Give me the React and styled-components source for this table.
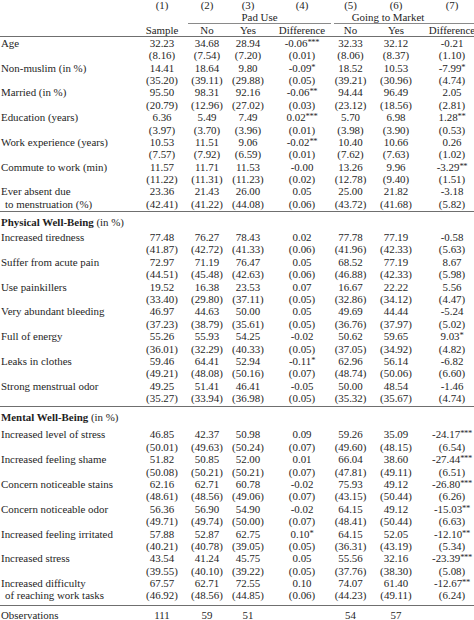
import React from "react";
import styled, { createGlobalStyle } from "styled-components";

const GlobalStyle = createGlobalStyle`
  body {
    margin: 0;
    background: #fff;
  }
`;

const Table = styled.div`
  width: 474px;
  margin-top: -1px;
  font-family: "Liberation Serif", "Times New Roman", serif;
  font-size: 10.9px;
  color: #1e1e1e;
  overflow: hidden;
`;

const Row = styled.div`
  display: grid;
  grid-template-columns: 141px 42px 48px 34px 74px 23px 68px 44px;
  height: 12.4px;
  line-height: 12.4px;
  margin-top: ${({ $mt }) => $mt || 0}px;
`;

const Cell = styled.div`
  display: flex;
  justify-content: center;
  white-space: nowrap;
`;

const Label = styled.div`
  white-space: nowrap;
  padding-left: ${({ $indent }) => ($indent ? "5px" : "1px")};
`;

const Span = styled.div`
  grid-column: ${({ $col }) => $col};
  display: flex;
  justify-content: center;
  white-space: nowrap;
  padding-right: ${({ $shift }) => $shift || 0}px;
  border-bottom: 1px solid #8a8a8a;
  margin: 0 ${({ $mr }) => $mr}px 0 ${({ $ml }) => $ml}px;
  height: 11.4px;
`;

const Rule = styled.div`
  border-top: 1px solid #6f6f6f;
  margin-top: ${({ $mt }) => $mt}px;
`;

const SectionTitle = styled.div`
  line-height: 12.4px;
  padding: ${({ $pt }) => $pt}px 0 ${({ $pb }) => $pb}px 1px;
  white-space: nowrap;
  b {
    font-weight: bold;
  }
`;

const Stars = styled.sup`
  font-size: 0.78em;
  line-height: 0;
  vertical-align: 0.2em;
  letter-spacing: -0.3px;
`;

const basic = [
  { label: "Age", v: ["32.23", "34.68", "28.94", "-0.06***", "32.33", "32.12", "-0.21"], s: ["(8.16)", "(7.54)", "(7.20)", "(0.01)", "(8.06)", "(8.37)", "(1.10)"] },
  { label: "Non-muslim (in %)", v: ["14.41", "18.64", "9.80", "-0.09*", "18.52", "10.53", "-7.99*"], s: ["(35.20)", "(39.11)", "(29.88)", "(0.05)", "(39.21)", "(30.96)", "(4.74)"] },
  { label: "Married (in %)", v: ["95.50", "98.31", "92.16", "-0.06**", "94.44", "96.49", "2.05"], s: ["(20.79)", "(12.96)", "(27.02)", "(0.03)", "(23.12)", "(18.56)", "(2.81)"] },
  { label: "Education (years)", v: ["6.36", "5.49", "7.49", "0.02***", "5.70", "6.98", "1.28**"], s: ["(3.97)", "(3.70)", "(3.96)", "(0.01)", "(3.98)", "(3.90)", "(0.53)"] },
  { label: "Work experience (years)", v: ["10.53", "11.51", "9.06", "-0.02**", "10.40", "10.66", "0.26"], s: ["(7.57)", "(7.92)", "(6.59)", "(0.01)", "(7.62)", "(7.63)", "(1.02)"] },
  { label: "Commute to work (min)", v: ["11.57", "11.71", "11.53", "-0.00", "13.26", "9.96", "-3.29**"], s: ["(11.22)", "(11.31)", "(11.23)", "(0.02)", "(12.78)", "(9.40)", "(1.51)"] },
  { label: "Ever absent due", label2: "to menstruation (%)", v: ["23.36", "21.43", "26.00", "0.05", "25.00", "21.82", "-3.18"], s: ["(42.41)", "(41.22)", "(44.08)", "(0.06)", "(43.72)", "(41.68)", "(5.82)"] },
];

const physical = [
  { label: "Increased tiredness", v: ["77.48", "76.27", "78.43", "0.02", "77.78", "77.19", "-0.58"], s: ["(41.87)", "(42.72)", "(41.33)", "(0.06)", "(41.96)", "(42.33)", "(5.63)"] },
  { label: "Suffer from acute pain", v: ["72.97", "71.19", "76.47", "0.05", "68.52", "77.19", "8.67"], s: ["(44.51)", "(45.48)", "(42.63)", "(0.06)", "(46.88)", "(42.33)", "(5.98)"] },
  { label: "Use painkillers", v: ["19.52", "16.38", "23.53", "0.07", "16.67", "22.22", "5.56"], s: ["(33.40)", "(29.80)", "(37.11)", "(0.05)", "(32.86)", "(34.12)", "(4.47)"] },
  { label: "Very abundant bleeding", v: ["46.97", "44.63", "50.00", "0.05", "49.69", "44.44", "-5.24"], s: ["(37.23)", "(38.79)", "(35.61)", "(0.05)", "(36.76)", "(37.97)", "(5.02)"] },
  { label: "Full of energy", v: ["55.26", "55.93", "54.25", "-0.02", "50.62", "59.65", "9.03*"], s: ["(36.01)", "(32.29)", "(40.33)", "(0.05)", "(37.05)", "(34.92)", "(4.82)"] },
  { label: "Leaks in clothes", v: ["59.46", "64.41", "52.94", "-0.11*", "62.96", "56.14", "-6.82"], s: ["(49.21)", "(48.08)", "(50.16)", "(0.07)", "(48.74)", "(50.06)", "(6.60)"] },
  { label: "Strong menstrual odor", v: ["49.25", "51.41", "46.41", "-0.05", "50.00", "48.54", "-1.46"], s: ["(35.27)", "(33.94)", "(36.98)", "(0.05)", "(35.32)", "(35.67)", "(4.74)"] },
];

const mental = [
  { label: "Increased level of stress", v: ["46.85", "42.37", "50.98", "0.09", "59.26", "35.09", "-24.17***"], s: ["(50.01)", "(49.63)", "(50.24)", "(0.07)", "(49.60)", "(48.15)", "(6.54)"] },
  { label: "Increased feeling shame", v: ["51.82", "50.85", "52.00", "0.01", "66.04", "38.60", "-27.44***"], s: ["(50.08)", "(50.21)", "(50.21)", "(0.07)", "(47.81)", "(49.11)", "(6.51)"] },
  { label: "Concern noticeable stains", v: ["62.16", "62.71", "60.78", "-0.02", "75.93", "49.12", "-26.80***"], s: ["(48.61)", "(48.56)", "(49.06)", "(0.07)", "(43.15)", "(50.44)", "(6.26)"] },
  { label: "Concern noticeable odor", v: ["56.36", "56.90", "54.90", "-0.02", "64.15", "49.12", "-15.03**"], s: ["(49.71)", "(49.74)", "(50.00)", "(0.07)", "(48.41)", "(50.44)", "(6.63)"] },
  { label: "Increased feeling irritated", v: ["57.88", "52.87", "62.75", "0.10*", "64.15", "52.05", "-12.10**"], s: ["(40.21)", "(40.78)", "(39.05)", "(0.05)", "(36.31)", "(43.19)", "(5.34)"] },
  { label: "Increased stress", v: ["43.54", "41.24", "45.75", "0.05", "55.56", "32.16", "-23.39***"], s: ["(39.55)", "(40.10)", "(39.22)", "(0.05)", "(37.76)", "(38.30)", "(5.08)"] },
  { label: "Increased difficulty", label2: "of reaching work tasks", v: ["67.57", "62.71", "72.55", "0.10", "74.07", "61.40", "-12.67**"], s: ["(46.92)", "(48.56)", "(44.85)", "(0.06)", "(44.23)", "(49.11)", "(6.24)"] },
];

// split "-0.06***" into the number and its stars
function Num({ text }) {
  const m = text.match(/^([^*]*)(\**)$/);
  return (
    <Cell>
      <span>
        {m[1]}
        {m[2] && <Stars>{m[2]}</Stars>}
      </span>
    </Cell>
  );
}

function Pair({ item }) {
  return (
    <>
      <Row>
        <Label>{item.label}</Label>
        {item.v.map((t, i) => (
          <Num key={i} text={t} />
        ))}
      </Row>
      <Row>
        <Label $indent>{item.label2 || ""}</Label>
        {item.s.map((t, i) => (
          <Cell key={i}>{t}</Cell>
        ))}
      </Row>
    </>
  );
}

export default function App() {
  return (
    <>
      <GlobalStyle />
      <Table>
        <Row>
          <Label />
          {["(1)", "(2)", "(3)", "(4)", "(5)", "(6)", "(7)"].map((t) => (
            <Cell key={t}>{t}</Cell>
          ))}
        </Row>
        <Row>
          <Label />
          <Cell />
          <Span $col="3 / 6" $ml={5} $mr={8}>
            Pad Use
          </Span>
          <Span $col="6 / 9" $ml={-5} $mr={0} $shift={32}>
            Going to Market
          </Span>
        </Row>
        <Row>
          <Label />
          {["Sample", "No", "Yes", "Difference", "No", "Yes", "Difference"].map((t, i) => (
            <Cell key={i}>{t}</Cell>
          ))}
        </Row>
        <Rule $mt={-0.4} />
        {basic.map((it) => (
          <Pair key={it.label} item={it} />
        ))}
        <Rule $mt={1} />
        <SectionTitle $pt={3.6} $pb={2.8}>
          <b>Physical Well-Being</b> (in %)
        </SectionTitle>
        {physical.map((it) => (
          <Pair key={it.label} item={it} />
        ))}
        <Rule $mt={1.6} />
        <SectionTitle $pt={3.6} $pb={5.3}>
          <b>Mental Well-Being</b> (in %)
        </SectionTitle>
        {mental.map((it) => (
          <Pair key={it.label} item={it} />
        ))}
        <Rule $mt={3} />
        <Row $mt={3}>
          <Label>Observations</Label>
          {["111", "59", "51", "", "54", "57", ""].map((t, i) => (
            <Cell key={i}>{t}</Cell>
          ))}
        </Row>
      </Table>
    </>
  );
}
